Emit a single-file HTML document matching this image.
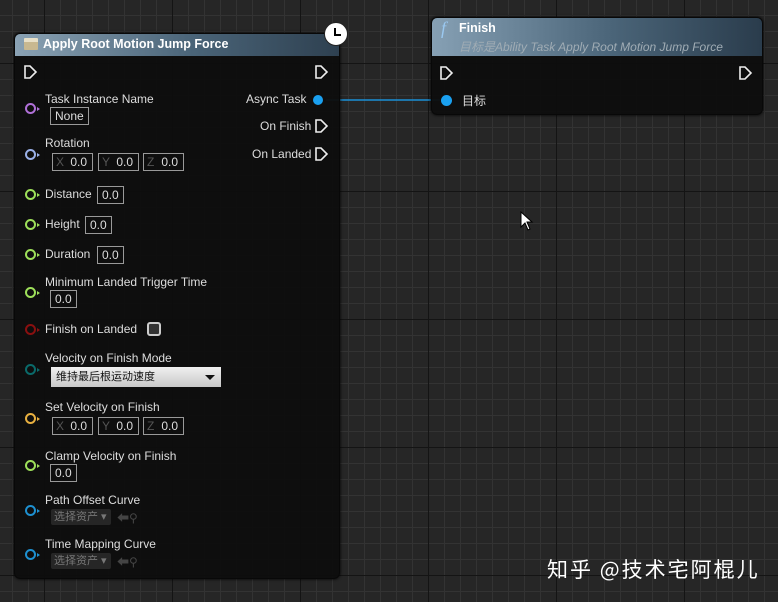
<!DOCTYPE html>
<html><head><meta charset="utf-8"><style>
*{margin:0;padding:0;box-sizing:border-box}
body{width:778px;height:602px;overflow:hidden;position:relative;font-family:"Liberation Sans","Noto Sans CJK SC",sans-serif;color:#ddd;font-size:12px;
background-color:#262626;
background-image:linear-gradient(90deg,#141414 1px,transparent 1px),linear-gradient(#141414 1px,transparent 1px),linear-gradient(90deg,#333 1px,transparent 1px),linear-gradient(#333 1px,transparent 1px);
background-size:128px 128px,128px 128px,16px 16px,16px 16px;
background-position:44px 63px,44px 63px,12px 15px,12px 15px;}
.a{position:absolute;white-space:nowrap}
.node{position:absolute;background:rgba(14,14,14,.96);border-radius:6px;box-shadow:0 0 3px #000;border:1px solid #080808}
.hdr{position:absolute;left:0;right:0;top:0;border-radius:5px 5px 0 0}
.pin{position:absolute;width:11px;height:11px;border-radius:50%;border:2px solid}
.pin:after{content:"";position:absolute;right:-6px;top:2px;border-left:3px solid;border-left-color:inherit;border-top:2.5px solid transparent;border-bottom:2.5px solid transparent}
.box{position:absolute;border:1px solid #999;height:18px;font-size:12px;line-height:16px;padding:0 4px;color:#ddd}
.lbl{font-size:12px;color:#ddd}
.xyz{position:absolute;border:1px solid #999;height:18px;width:41px;line-height:16px;font-size:12px}
.xyz i{font-style:normal;color:#555;position:absolute;left:3px}
.xyz b{font-weight:normal;position:absolute;right:5px}
.sel{position:absolute;background:#262626;color:#777;font-size:11px;height:16px;line-height:16px;padding:0 3px;width:60px;border-radius:2px}
</style></head><body>
<svg class="a" style="left:0;top:0" width="778" height="602"><path d="M326 100 L440 100" stroke="#1a8fd6" stroke-width="1.5"/></svg>

<!-- left node -->
<div class="node" style="left:14px;top:33px;width:326px;height:546px">
 <div class="hdr" style="height:22px;background:linear-gradient(90deg,#8aa2b4,#4a6478 55%,#2e4050)"></div>
</div>
<!-- right node -->
<div class="node" style="left:431px;top:17px;width:332px;height:98px">
 <div class="hdr" style="height:38px;background:linear-gradient(90deg,#86a0b4,#4a6478 55%,#2a3c4c)"></div>
</div>

<div class="a" style="left:24px;top:38px;width:14px;height:12px;background:linear-gradient(#e8e0c8 35%,#c8b890 35%);border-radius:1px"></div>
<div class="a" style="left:43px;top:37px;font-weight:bold;font-size:12.5px;color:#fff">Apply Root Motion Jump Force</div>
<div class="a" style="left:324px;top:22px;width:24px;height:24px;border-radius:50%;background:#fff;border:1px solid #222"></div>
<svg class="a" style="left:324px;top:22px" width="24" height="24"><path d="M11 6 V13 H17" stroke="#000" stroke-width="2" fill="none"/></svg>

<svg class="a" style="left:0;top:0" width="778" height="602" fill="none" stroke="#eee" stroke-width="1.6">
<path d="M25 66 h5 l6 6 l-6 6 h-5z"/>
<path d="M316 66 h5 l6 6 l-6 6 h-5z"/>
<path d="M316 120 h5 l6 6 l-6 6 h-5z"/>
<path d="M316 148 h5 l6 6 l-6 6 h-5z"/>
<path d="M441 67 h5 l6 6 l-6 6 h-5z"/>
<path d="M740 67 h5 l6 6 l-6 6 h-5z"/>
</svg>

<div class="a lbl" style="left:45px;top:92px">Task Instance Name</div>
<div class="pin" style="left:25px;top:103px;border-color:#b070d8"></div>
<div class="box" style="left:50px;top:107px">None</div>

<div class="a lbl" style="left:45px;top:136px">Rotation</div>
<div class="pin" style="left:25px;top:149px;border-color:#9ab0e8"></div>
<div class="xyz" style="left:52px;top:153px"><i>X</i><b>0.0</b></div>
<div class="xyz" style="left:98px;top:153px"><i>Y</i><b>0.0</b></div>
<div class="xyz" style="left:143px;top:153px"><i>Z</i><b>0.0</b></div>

<div class="pin" style="left:25px;top:189px;border-color:#9ee05a"></div>
<div class="a lbl" style="left:45px;top:187px">Distance</div><div class="box" style="left:97px;top:186px">0.0</div>
<div class="pin" style="left:25px;top:219px;border-color:#9ee05a"></div>
<div class="a lbl" style="left:45px;top:217px">Height</div><div class="box" style="left:85px;top:216px">0.0</div>
<div class="pin" style="left:25px;top:249px;border-color:#9ee05a"></div>
<div class="a lbl" style="left:45px;top:247px">Duration</div><div class="box" style="left:97px;top:246px">0.0</div>

<div class="a lbl" style="left:45px;top:275px">Minimum Landed Trigger Time</div>
<div class="pin" style="left:25px;top:287px;border-color:#9ee05a"></div>
<div class="box" style="left:50px;top:290px">0.0</div>

<div class="pin" style="left:25px;top:324px;border-color:#8a1010"></div>
<div class="a lbl" style="left:45px;top:322px">Finish on Landed</div>
<div class="a" style="left:147px;top:322px;width:14px;height:14px;border:2px solid #ccc;border-radius:3px;background:#333"></div>

<div class="a lbl" style="left:45px;top:351px">Velocity on Finish Mode</div>
<div class="pin" style="left:25px;top:364px;border-color:#0a6a6a"></div>
<div class="a" style="left:51px;top:367px;width:170px;height:20px;background:linear-gradient(#f0f0f0,#c8c8c8);color:#111;font-size:11px;line-height:20px;padding-left:5px">维持最后根运动速度</div>
<div class="a" style="left:205px;top:375px;border-top:5px solid #111;border-left:5px solid transparent;border-right:5px solid transparent"></div>

<div class="a lbl" style="left:45px;top:400px">Set Velocity on Finish</div>
<div class="pin" style="left:25px;top:413px;border-color:#e8b040"></div>
<div class="xyz" style="left:52px;top:417px"><i>X</i><b>0.0</b></div>
<div class="xyz" style="left:98px;top:417px"><i>Y</i><b>0.0</b></div>
<div class="xyz" style="left:143px;top:417px"><i>Z</i><b>0.0</b></div>

<div class="a lbl" style="left:45px;top:449px">Clamp Velocity on Finish</div>
<div class="pin" style="left:25px;top:460px;border-color:#9ee05a"></div>
<div class="box" style="left:50px;top:464px">0.0</div>

<div class="a lbl" style="left:45px;top:493px">Path Offset Curve</div>
<div class="pin" style="left:25px;top:505px;border-color:#1e90d0"></div>
<div class="sel" style="left:51px;top:509px">选择资产 ▾</div>
<div class="a" style="left:117px;top:509px;color:#444;font-size:12px">⬅⚲</div>

<div class="a lbl" style="left:45px;top:537px">Time Mapping Curve</div>
<div class="pin" style="left:25px;top:549px;border-color:#1e90d0"></div>
<div class="sel" style="left:51px;top:553px">选择资产 ▾</div>
<div class="a" style="left:117px;top:553px;color:#444;font-size:12px">⬅⚲</div>

<div class="a lbl" style="left:246px;top:92px">Async Task</div>
<div class="a" style="left:313px;top:95px;width:10px;height:10px;border-radius:50%;background:#1aa0f0"></div>
<div class="a lbl" style="left:260px;top:119px">On Finish</div>
<div class="a lbl" style="left:252px;top:147px">On Landed</div>

<div class="a" style="left:441px;top:18px;font-family:'Liberation Serif',serif;font-style:italic;font-size:18px;color:#9ac8f0">f</div>
<div class="a" style="left:459px;top:21px;font-weight:bold;color:#fff;font-size:12.5px">Finish</div>
<div class="a" style="left:459px;top:38px;color:#a0acb4;font-style:italic;font-size:12px">目标是Ability Task Apply Root Motion Jump Force</div>
<div class="a" style="left:441px;top:95px;width:11px;height:11px;border-radius:50%;background:#1aa0f0"></div>
<div class="a lbl" style="left:462px;top:92px">目标</div>

<svg class="a" style="left:520px;top:211px" width="14" height="20"><path d="M1 1 V16 L5 12 L8 19 L10 18 L7 11 H12 Z" fill="#fff" stroke="#000" stroke-width="1"/></svg>

<div class="a" style="left:547px;top:554px;font-size:21px;letter-spacing:2px;color:#fff;font-family:'Noto Sans CJK SC',sans-serif">知乎 @技术宅阿棍儿</div>
</body></html>
